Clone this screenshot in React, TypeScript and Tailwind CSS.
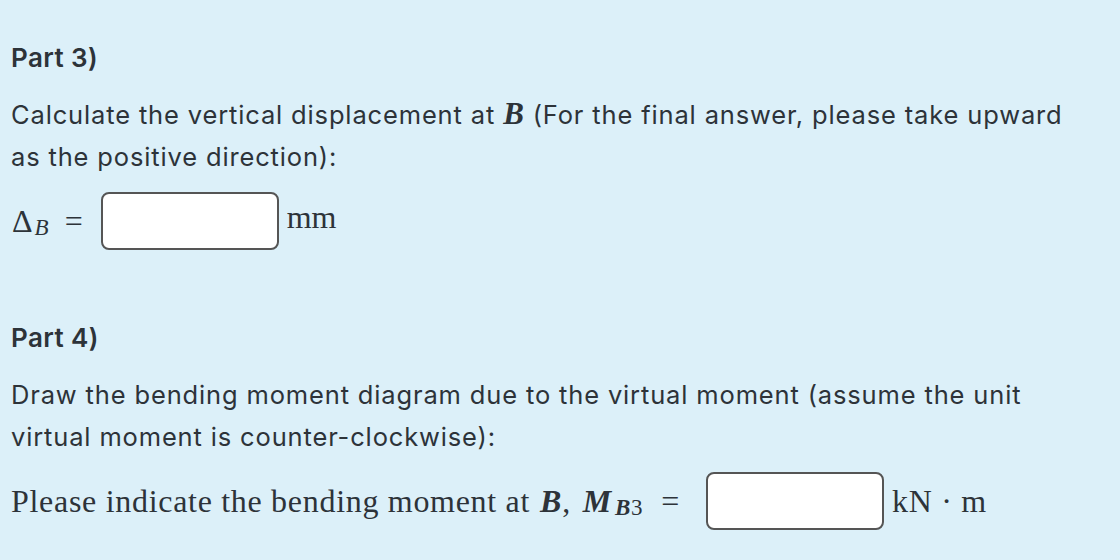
export default function App() {
  const sans = { fontFamily: 'Inter, "Open Sans", sans-serif' };
  return (
    <div className="w-[1120px] h-[560px] bg-[#dcf0f9] text-[#2d3339] overflow-hidden px-[11px] pt-[42px]" style={sans}>
      <div className="text-[26px] font-semibold leading-[32px] tracking-[0.4px]">Part 3)</div>
      <p className="mt-[19px] text-[25.5px] leading-[42px] tracking-[0.85px] w-[1070px]">
        Calculate the vertical displacement at{' '}
        <i className="font-['Liberation_Serif',serif] font-bold text-[31px]">B</i> (For the final answer, please take upward
        as the positive direction):
      </p>
      <div className="mt-[14px] flex items-center font-['Liberation_Serif',serif] text-[32px]">
        <span className="ml-[1px]">Δ</span>
        <i className="text-[23px] mt-[14px] ml-[2px]">B</i>
        <span className="ml-[16px]">=</span>
        <div className="ml-[18px] w-[178px] h-[58px] bg-white border-2 border-[#555] rounded-[8px]" />
        <span className="ml-[8px] -mt-[8px]">mm</span>
      </div>
      <div className="mt-[72px] text-[26px] font-semibold leading-[32px] tracking-[0.4px]">Part 4)</div>
      <p className="mt-[20px] text-[25.5px] leading-[42px] tracking-[0.85px] w-[1070px]">
        Draw the bending moment diagram due to the virtual moment (assume the unit virtual moment is counter-clockwise):
      </p>
      <div className="mt-[14px] flex items-center font-['Liberation_Serif',serif] text-[32px] tracking-[0.7px]">
        <span>Please indicate the bending moment at </span>
        <i className="font-bold ml-[10px]">B</i>
        <span>,</span>
        <i className="font-bold ml-[12px]">M</i>
        <i className="text-[23px] mt-[14px] ml-[3px] font-bold">B</i>
        <span className="text-[23px] mt-[14px]">3</span>
        <span className="ml-[18px]">=</span>
        <div className="ml-[26px] w-[178px] h-[58px] bg-white border-2 border-[#555] rounded-[8px]" />
        <span className="ml-[8px]">kN · m</span>
      </div>
    </div>
  );
}
